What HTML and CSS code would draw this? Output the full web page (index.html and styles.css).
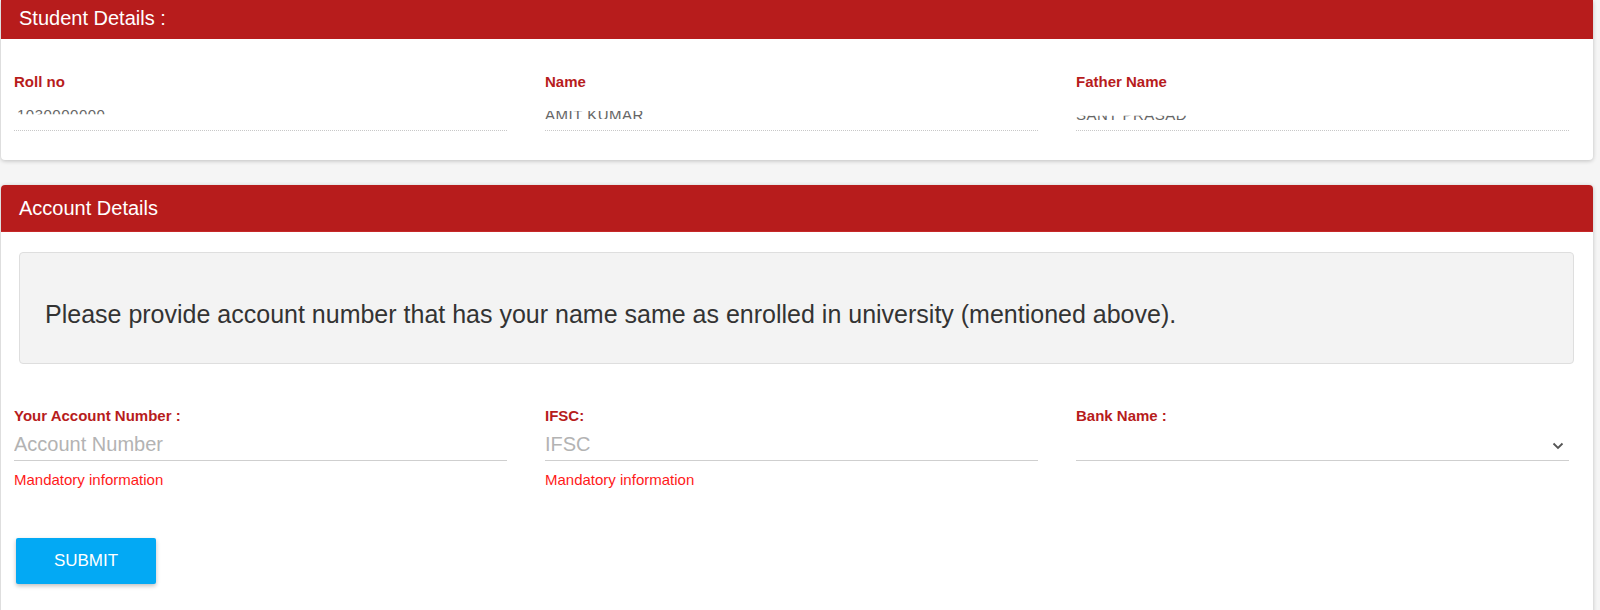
FILE: index.html
```html
<!DOCTYPE html>
<html lang="en">
<head>
<meta charset="utf-8">
<title>Student Account Details</title>
<link rel="stylesheet" href="styles.css">
</head>
<body>
<div class="page">
  <section class="card card-student">
    <div class="card-header head-student">Student Details :</div>
    <div class="card-body body-student">
      <div class="grid">
        <div class="field">
          <div class="label">Roll no</div>
          <div class="value"><span class="clip clip-roll">1030000000</span></div>
        </div>
        <div class="field">
          <div class="label">Name</div>
          <div class="value"><span class="clip clip-name">AMIT KUMAR</span></div>
        </div>
        <div class="field">
          <div class="label">Father Name</div>
          <div class="value"><span class="clip clip-father">SANT PRASAD</span></div>
        </div>
      </div>
    </div>
  </section>

  <section class="card card-account">
    <div class="card-header head-account">Account Details</div>
    <div class="card-body body-account">
      <div class="alert">Please provide account number that has your name same as enrolled in university (mentioned above).</div>
      <div class="grid form-grid">
        <div class="field">
          <div class="label">Your Account Number :</div>
          <input class="input" type="text" placeholder="Account Number">
          <div class="error">Mandatory information</div>
        </div>
        <div class="field">
          <div class="label">IFSC:</div>
          <input class="input" type="text" placeholder="IFSC">
          <div class="error">Mandatory information</div>
        </div>
        <div class="field">
          <div class="label">Bank Name :</div>
          <div class="select">
            <span class="select-text"></span>
            <svg class="chevron" width="12" height="8" viewBox="0 0 12 8"><path d="M1.5 1.5 L6 6 L10.5 1.5" fill="none" stroke="#555" stroke-width="1.8"/></svg>
          </div>
        </div>
      </div>
      <div class="actions">
        <button class="btn-submit" type="button">SUBMIT</button>
      </div>
    </div>
  </section>
</div>
</body>
</html>
```

FILE: styles.css
```css
* { box-sizing: border-box; }
html, body {
  margin: 0;
  padding: 0;
  background: #f5f5f5;
  font-family: "Liberation Sans", Arial, sans-serif;
  color: #333;
}
.page {
  padding: 0 7px 0 1px;
  display: flex;
  flex-direction: column;
  gap: 25px;
}
.card {
  background: #fff;
  border-radius: 0 0 4px 4px;
  box-shadow: 0 1px 4px rgba(0,0,0,0.22);
  overflow: hidden;
}
.card-account {
  border-radius: 4px 4px 0 0;
  height: 440px;
}
.card-header {
  background: #b71c1c;
  color: #fff;
  font-size: 20px;
  line-height: 24px;
  padding: 6px 18px 9px;
  height: 39px;
}
.head-account {
  padding: 11px 18px 12px;
  height: 47px;
  border-bottom: 1px solid #c62828;
}
.body-student {
  padding: 35px 24px 29px 13px;
}
.grid {
  display: grid;
  grid-template-columns: 493px 493px 493px;
  column-gap: 38px;
}
.label {
  color: #b71c1c;
  font-weight: bold;
  font-size: 15px;
  line-height: 16px;
}
.value {
  height: 41px;
  border-bottom: 1px dotted #c8c8c8;
  padding-top: 17px;
}
.clip {
  display: block;
  font-size: 15px;
  line-height: 16px;
  color: #666;
  letter-spacing: 0.5px;
}
.clip-roll { clip-path: inset(0 0 55% 0); padding-left: 3px; }
.clip-name { clip-path: inset(25% 0 25% 0); }
.clip-father { clip-path: inset(55% 0 0 0); }

.body-account {
  padding: 20px 19px 0 18px;
}
.alert {
  background: #f3f3f3;
  border: 1px solid #dedede;
  border-radius: 4px;
  font-size: 25px;
  line-height: 28px;
  color: #333;
  padding: 47px 25px 35px;
  height: 112px;
}
.form-grid {
  margin-left: -5px;
  padding-top: 44px;
}
.input {
  display: block;
  width: 100%;
  margin-top: 8px;
  border: 0;
  border-bottom: 1px solid #cfcfcf;
  padding: 0 0 4px 0;
  height: 29px;
  font-family: "Liberation Sans", Arial, sans-serif;
  font-size: 20px;
  line-height: 24px;
  color: #333;
  background: transparent;
  outline: none;
}
.input::placeholder { color: #b3b3b3; }
.error {
  color: #ff1a1a;
  font-size: 15px;
  line-height: 16px;
  margin-top: 11px;
}
.select {
  margin-top: 8px;
  height: 29px;
  border-bottom: 1px solid #cfcfcf;
  display: flex;
  align-items: center;
  justify-content: flex-end;
  padding: 0 5px 0 0;
}
.actions {
  padding-top: 50px;
  margin-left: -3px;
}
.btn-submit {
  width: 140px;
  height: 46px;
  border: 0;
  border-radius: 2px;
  background: #03a9f4;
  color: #fff;
  font-family: "Liberation Sans", Arial, sans-serif;
  font-size: 17px;
  box-shadow: 0 2px 4px rgba(0,0,0,0.25);
  cursor: pointer;
}
```
